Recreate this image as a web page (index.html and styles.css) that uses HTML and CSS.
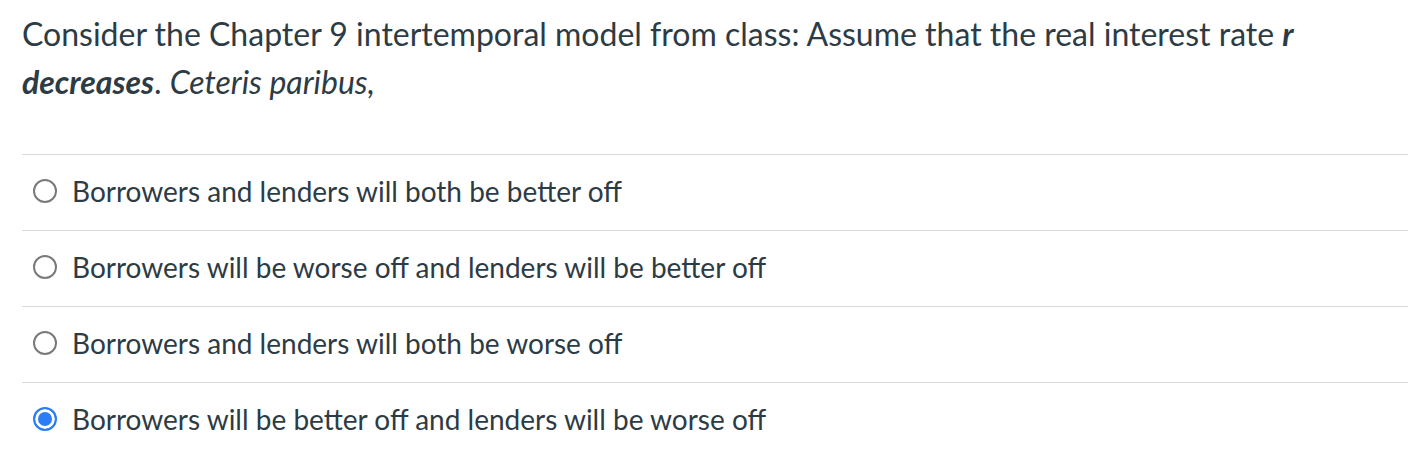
FILE: index.html
```html
<!DOCTYPE html>
<html lang="en">
<head>
<meta charset="utf-8">
<title>Question</title>
<link rel="stylesheet" href="styles.css">
</head>
<body>
<div class="question">
  <div class="question-text">
    <p>Consider the Chapter 9 intertemporal model from class: Assume that the real interest rate <strong><em>r</em></strong> <strong><em>decreases</em></strong>. <em>Ceteris paribus,</em></p>
  </div>
  <div class="answers">
    <label class="answer">
      <span class="radio"></span>
      <span class="answer-text">Borrowers and lenders will both be better off</span>
    </label>
    <label class="answer">
      <span class="radio"></span>
      <span class="answer-text">Borrowers will be worse off and lenders will be better off</span>
    </label>
    <label class="answer">
      <span class="radio"></span>
      <span class="answer-text">Borrowers and lenders will both be worse off</span>
    </label>
    <label class="answer">
      <span class="radio radio-checked"></span>
      <span class="answer-text">Borrowers will be better off and lenders will be worse off</span>
    </label>
  </div>
</div>
</body>
</html>
```

FILE: styles.css
```css
html, body {
  margin: 0;
  padding: 0;
  background: #ffffff;
}

body {
  font-family: Lato, "Open Sans", sans-serif;
  color: #2d3b45;
}

.question {
  padding-left: 22px;
}

.question-text {
  padding-top: 10px;
  padding-bottom: 48px;
}

.question-text p {
  margin: 0;
  font-size: 32px;
  line-height: 48px;
  max-width: 1300px;
}

.answers {
  display: flex;
  flex-direction: column;
}

.answer {
  display: flex;
  align-items: center;
  box-sizing: border-box;
  height: 76px;
  padding-bottom: 4px;
  border-top: 1px solid #dadada;
  gap: 15px;
  padding-left: 11px;
}

.radio {
  box-sizing: border-box;
  width: 24px;
  height: 24px;
  border-radius: 50%;
  border: 2px solid #7a7a7a;
  background: #fff;
  flex: none;
}

.radio-checked {
  border: 2px solid #2b7cf6;
  background: #2b7cf6;
  box-shadow: inset 0 0 0 3px #fff;
}

.answer-text {
  font-size: 28px;
  line-height: 34px;
}
```
